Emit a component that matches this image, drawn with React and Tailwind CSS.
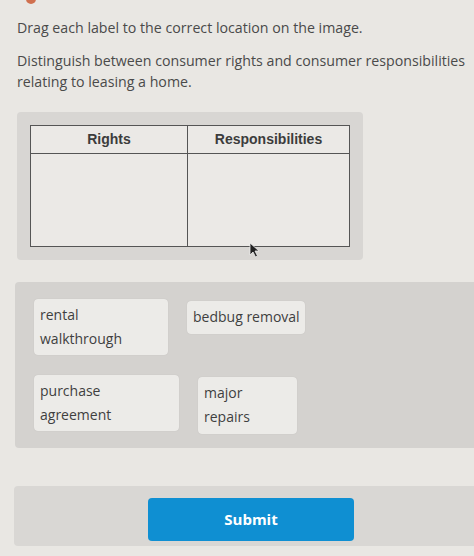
import React from 'react';

const Label = ({ lines, className }) => (
  <div className={`whitespace-nowrap rounded bg-[#ecebe8] px-[6px] text-[14px] leading-[24px] text-[#3f3f3f] shadow-[0_0_1px_rgba(0,0,0,0.15)] ${className}`}>
    {lines.map((l) => (
      <div key={l}>{l}</div>
    ))}
  </div>
);

const App = () => {
  return (
    <div className="relative h-[556px] w-[474px] overflow-hidden bg-[#e9e7e3] font-['Open_Sans',sans-serif] text-[#4a4a4a]">
      <div className="absolute left-[26px] top-[-6px] h-[10px] w-[10px] rounded-full bg-[#d0704f]" />
      <div className="pl-[17px] pt-[17px] text-[14.2px]">
        <p className="leading-[21px]">Drag each label to the correct location on the image.</p>
        <p className="mt-[12px] leading-[21px]">
          Distinguish between consumer rights and consumer responsibilities
          <br />
          relating to leasing a home.
        </p>
      </div>

      <div className="ml-[17px] mt-[20px] w-[346px] rounded-sm bg-[#d8d6d3] p-[13px]">
        <div className="relative border-[1.5px] border-[#555] bg-[#ebe9e6] font-['Liberation_Sans',sans-serif]">
          <div className="grid h-[28px] grid-cols-[157px_1fr] border-b-[1.5px] border-[#555] text-[14px] font-bold text-[#3c3c3c]">
            <div className="flex items-center justify-center border-r-[1.5px] border-[#555]">Rights</div>
            <div className="flex items-center justify-center">Responsibilities</div>
          </div>
          <div className="grid h-[92px] grid-cols-[157px_1fr]">
            <div className="border-r-[1.5px] border-[#555]" />
            <div />
          </div>
          <svg className="absolute left-[218px] top-[116px]" width="12" height="16" viewBox="0 0 12 16">
            <path d="M1 1 L1 13 L4 10 L6.5 15 L8.5 14 L6 9 L10 9 Z" fill="#222" stroke="#eee" strokeWidth="0.8" />
          </svg>
        </div>
      </div>

      <div className="ml-[15px] mt-[22px] h-[166px] rounded-l bg-[#d4d2cf] pl-[19px] pt-[17px]">
        <div className="flex items-start">
          <Label lines={['rental', 'walkthrough']} className="h-[56px] w-[134px] py-[4px]" />
          <Label lines={['bedbug removal']} className="ml-[19px] mt-[2px] h-[33px] w-[118px] pt-[4px]" />
        </div>
        <div className="mt-[20px] flex items-start">
          <Label lines={['purchase', 'agreement']} className="h-[56px] w-[145px] py-[4px]" />
          <Label lines={['major', 'repairs']} className="ml-[19px] mt-[2px] h-[57px] w-[99px] py-[4px]" />
        </div>
      </div>

      <div className="ml-[14px] mt-[38px] flex h-[60px] items-start rounded-l bg-[#d9d7d4] pl-[134px] pt-[12px]">
        <button className="h-[43px] w-[206px] rounded bg-[#0f8fd2] text-[15px] font-bold text-white">
          Submit
        </button>
      </div>
    </div>
  );
};

export default App;
